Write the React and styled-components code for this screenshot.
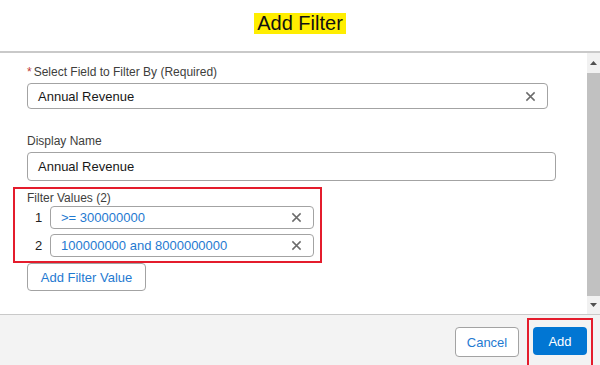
import styled, { createGlobalStyle } from "styled-components";

const Global = createGlobalStyle`
  html, body {
    margin: 0;
    padding: 0;
    background: #fff;
  }
  body {
    font-family: "Liberation Sans", Arial, sans-serif;
  }
`

const Page = styled.div`
  width: 600px;
  height: 365px;
  display: flex;
  flex-direction: column;
  overflow: hidden;
`
const Header = styled.div`
  height: 53px;
  border-bottom: 2px solid #c9c9c9;
  display: flex;
  justify-content: center;
  align-items: flex-start;
  padding-top: 13px;
  box-sizing: border-box;
`
const Title = styled.h2`
  margin: 0;
  background: #ffee00;
  color: #111;
  font-weight: 400;
  font-size: 20px;
  line-height: 21px;
  padding: 0 3px;
`
const Body = styled.div`
  flex: 1;
  display: flex;
  min-height: 0;
`
const Content = styled.div`
  flex: 1;
  padding: 11px 0 0 27px;
  display: flex;
  flex-direction: column;
  align-items: flex-start;
`
const Label = styled.div`
  font-size: 12px;
  line-height: 16px;
  color: #3e3e3c;
  margin: ${p => p.$top || 0}px 0 3px;
`
const Req = styled.span`
  color: #c23934;
  margin-right: 2px;
`
const Input = styled.div`
  width: ${p => p.$w}px;
  height: ${p => p.$h}px;
  box-sizing: border-box;
  border: 1px solid #a3a3a3;
  border-radius: 4px;
  display: flex;
  align-items: center;
  padding: 0 11px 0 10px;
  font-size: 13px;
  color: ${p => (p.$blue ? "#1f7ad1" : "#181818")};
  background: #fff;
`
const Grow = styled.span`
  flex: 1;
`
const Clear = styled.svg`
  width: 11px;
  height: 11px;
  stroke: #6b6b6b;
  stroke-width: 1.6;
  fill: none;
`
const Values = styled.div`
  margin: 6px 0 0 -14px;
  width: 309px;
  box-sizing: border-box;
  border: 2px solid #e41c2c;
  padding: 3px 6px 4px 12px;
`
const ValuesLabel = styled(Label)`
  margin: 0 0 0 0;
  line-height: 13px;
`
const Row = styled.div`
  display: flex;
  align-items: center;
  margin-top: ${p => (p.$first ? 1 : 5)}px;
`
const Num = styled.div`
  width: 23px;
  text-align: center;
  font-size: 13px;
  color: #222;
`
const AddValue = styled.button`
  margin-top: 0;
  width: 119px;
  height: 28px;
  border: 1px solid #a3a3a3;
  border-radius: 4px;
  background: #fff;
  color: #1f7ad1;
  font-family: inherit;
  font-size: 13px;
  padding: 0;
`
const Scrollbar = styled.div`
  width: 13px;
  background: #f1f1f1;
  display: flex;
  flex-direction: column;
  align-items: center;
`
const Arrow = styled.div`
  height: ${p => p.$h}px;
  display: flex;
  align-items: center;
  justify-content: center;
  width: 100%;
`
const Thumb = styled.div`
  flex: 1;
  width: 100%;
  background: #c1c1c1;
`
const Footer = styled.div`
  height: 51px;
  flex-shrink: 0;
  border-top: 1px solid #c9c9c9;
  background: #f3f3f3;
  display: flex;
  justify-content: flex-end;
  align-items: flex-start;
  padding: 3px 7px 0 0;
  box-sizing: border-box;
`
const Cancel = styled.button`
  margin-top: 9px;
  width: 64px;
  height: 30px;
  border: 1px solid #a3a3a3;
  border-radius: 4px;
  background: #fff;
  color: #1f7ad1;
  font-family: inherit;
  font-size: 13px;
  padding: 0;
`
const Highlight = styled.div`
  margin-left: 8px;
  height: 60px;
  border: 2px solid #e41c2c;
  padding: 7px 4px 0 4px;
  box-sizing: border-box;
`
const Primary = styled.button`
  width: 54px;
  height: 28px;
  border: none;
  border-radius: 4px;
  background: #0176d3;
  color: #fff;
  font-family: inherit;
  font-size: 13px;
  padding: 0;
`

const X = () => (
  <Clear viewBox="0 0 12 12">
    <path d="M1.5 1.5l9 9M10.5 1.5l-9 9" />
  </Clear>
)

const Tri = ({ up }) => (
  <svg width="7" height="4" viewBox="0 0 7 4">
    <path d={up ? "M0 4h7L3.5 0z" : "M0 0h7L3.5 4z"} fill="#505050" />
  </svg>
)

export default function App() {
  return (
    <Page>
      <Global />
      <Header>
        <Title>Add Filter</Title>
      </Header>
      <Body>
        <Content>
          <Label>
            <Req>*</Req>Select Field to Filter By (Required)
          </Label>
          <Input $w={521} $h={26}>
            <Grow>Annual Revenue</Grow>
            <X />
          </Input>
          <Label $top={24}>Display Name</Label>
          <Input $w={529} $h={29}>
            <Grow>Annual Revenue</Grow>
          </Input>
          <Values>
            <ValuesLabel>Filter Values (2)</ValuesLabel>
            <Row $first>
              <Num>1</Num>
              <Input $w={264} $h={23} $blue>
                <Grow>&gt;= 300000000</Grow>
                <X />
              </Input>
            </Row>
            <Row>
              <Num>2</Num>
              <Input $w={264} $h={23} $blue>
                <Grow>100000000 and 8000000000</Grow>
                <X />
              </Input>
            </Row>
          </Values>
          <AddValue>Add Filter Value</AddValue>
        </Content>
        <Scrollbar>
          <Arrow $h={20}><Tri up /></Arrow>
          <Thumb />
          <Arrow $h={18}><Tri /></Arrow>
        </Scrollbar>
      </Body>
      <Footer>
        <Cancel>Cancel</Cancel>
        <Highlight>
          <Primary>Add</Primary>
        </Highlight>
      </Footer>
    </Page>
  )
}
